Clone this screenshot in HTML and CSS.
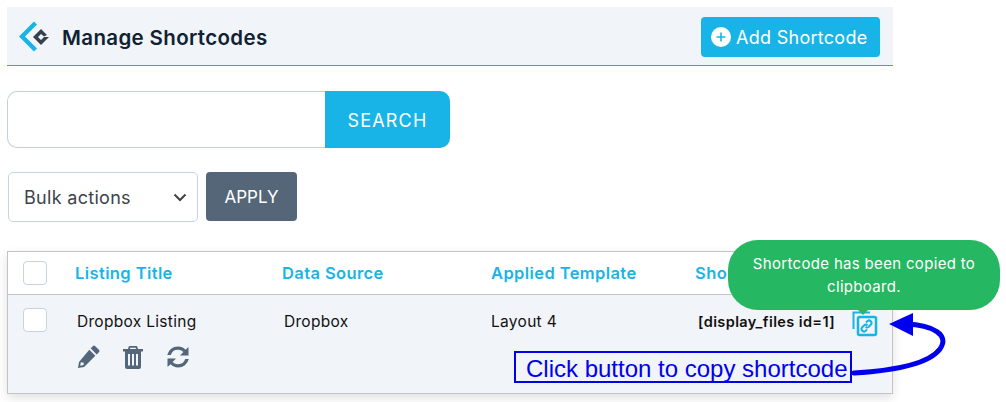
FILE: index.html
```html
<!DOCTYPE html>
<html lang="en">
<head>
<meta charset="utf-8">
<title>Manage Shortcodes</title>
<link rel="stylesheet" href="styles.css">
</head>
<body>
<div class="page">
  <header class="topbar">
    <div class="brand">
      <svg class="logo" width="32" height="32" viewBox="0 0 32 32">
        <path d="M16.500 2 L3 15.500 L16.500 29" fill="none" stroke="#19b4e7" stroke-width="4.400"/>
        <path d="M22 8 L28 14 L25 15.500 L22 13 L19 16 L22 19 L25 16 H30 L22 24 L14 16 Z" fill="#37404d"/>
      </svg>
      <h1 class="title">Manage Shortcodes</h1>
    </div>
    <button class="add-btn">
      <svg class="add-icon" width="20" height="20" viewBox="0 0 20 20">
        <circle cx="10" cy="10" r="10" fill="#fff"/>
        <path d="M10 5.500V14.500M5.500 10H14.500" stroke="#19b4e7" stroke-width="1.600"/>
      </svg>
      <span>Add Shortcode</span>
    </button>
  </header>

  <form class="search">
    <input class="search-input" type="text" aria-label="Search">
    <button class="search-btn" type="button">SEARCH</button>
  </form>

  <div class="bulk">
    <div class="select">
      <span>Bulk actions</span>
      <svg width="14" height="9" viewBox="0 0 14 9"><path d="M1.500 1.500L7 7L12.500 1.500" fill="none" stroke="#3c434a" stroke-width="2"/></svg>
    </div>
    <button class="apply-btn" type="button">APPLY</button>
  </div>

  <section class="table">
    <div class="row head">
      <span class="cell-check"><span class="check"></span></span>
      <span class="c1">Listing Title</span>
      <span class="c2">Data Source</span>
      <span class="c3">Applied Template</span>
      <span class="c4">Shortcode</span>
    </div>
    <div class="row body-row">
      <span class="cell-check"><span class="check"></span></span>
      <div class="c1 first">
        <span class="name">Dropbox Listing</span>
        <div class="actions">
          <svg width="24" height="24" viewBox="0 0 24 24"><path fill="#54677a" d="M16.500 1.200a1.800 1.800 0 0 1 2.500 0l3.800 3.800a1.800 1.800 0 0 1 0 2.500l-2.300 2.300-6.300-6.300zM12.800 4.900l6.300 6.300L7.400 22.900 1 24l1.100-6.400zM4 18l-.7 3.500 3.500-.7.3-2.300z" transform="scale(.96)"/></svg>
          <svg width="20" height="23" viewBox="0 0 20 23"><path fill="#54677a" d="M7 0h6a1.500 1.500 0 0 1 1.500 1.200L15 3h5v2.500h-2V21a2 2 0 0 1-2 2H4a2 2 0 0 1-2-2V5.500H0V3h5l.5-1.800A1.500 1.500 0 0 1 7 0zM7.300 1.800 7 3h6l-.3-1.200zM5 8v11.500h2V8zm4 0v11.500h2V8zm4 0v11.500h2V8z"/></svg>
          <svg width="24" height="24" viewBox="0 0 24 24"><path fill="#54677a" d="M12 1.500c3 0 5.600 1.200 7.500 3.200L22.500 2v8.500H14l3.400-3.400A7.600 7.600 0 0 0 12 4.800 7.400 7.400 0 0 0 4.800 10H1.200A10.900 10.900 0 0 1 12 1.500zM1.500 13.500H10l-3.400 3.400A7.600 7.600 0 0 0 12 19.200a7.400 7.400 0 0 0 7.200-5.200h3.600A10.900 10.900 0 0 1 12 22.500c-3 0-5.600-1.200-7.500-3.200L1.500 22z"/></svg>
        </div>
      </div>
      <span class="c2 cell">Dropbox</span>
      <span class="c3 cell">Layout 4</span>
      <span class="c4 cell code">[display_files id=1]</span>
    </div>
  </section>

  <svg class="copy-icon" width="26" height="28" viewBox="0 0 26 28" aria-hidden="true">
    <path d="M1.500 20V3.500H18" fill="none" stroke="#19b4e7" stroke-width="2"/>
    <rect x="6" y="8" width="18" height="18" rx="1.500" fill="#f1f4f8" stroke="#19b4e7" stroke-width="2.500"/>
    <path d="M14 13.500l1.500-1.500a2.500 2.500 0 0 1 3.500 3.500l-2.500 2.500a2.500 2.500 0 0 1-3 0M15.500 16.500a2.500 2.500 0 0 0-3-.5l-2.500 2.500a2.500 2.500 0 0 0 3.500 3.500l1.500-1.500" fill="none" stroke="#19b4e7" stroke-width="2"/>
  </svg>

  <div class="toast">Shortcode has been copied to clipboard.</div>
  <span class="toast-tip"></span>

  <div class="callout">Click button to copy shortcode</div>
  <svg class="arrow" width="110" height="70" viewBox="0 0 110 70" aria-hidden="true">
    <path d="M6 60 C 40 58, 80 52, 92 36 C 102 22, 85 12, 58 11" fill="none" stroke="#0000ee" stroke-width="5" stroke-linecap="round"/>
    <path d="M41 11 L65 0 L65 23 Z" fill="#0000ee"/>
  </svg>
</div>
</body>
</html>
```

FILE: styles.css
```css
* { box-sizing: border-box; }
html, body { margin: 0; padding: 0; background: #fff; }
body { font-family: Inter, "Open Sans", sans-serif; color: #111; overflow: hidden; }
.page { position: relative; width: 1006px; height: 402px; padding: 7px 113px 0 7px; }

.topbar {
  height: 59px;
  background: #f1f4f8;
  border-bottom: 1px solid #29a9d6;
  display: flex;
  align-items: center;
  justify-content: space-between;
  padding: 2px 13px 0 12px;
}
.brand { display: flex; align-items: center; gap: 11px; }
.logo { display: block; }
.title { margin: 0; font-size: 20.500px; font-weight: 600; color: #0f2233; letter-spacing: .35px; }
.add-btn {
  width: 179px; height: 40px;
  border: 0; border-radius: 4px;
  background: #19b4e7; color: #fff;
  display: flex; align-items: center; gap: 5px;
  padding: 0 0 0 10px;
  font: 400 18px Inter, sans-serif;
  letter-spacing: .28px;
}
.add-icon { display: block; flex: none; }

.search { display: flex; margin-top: 25px; height: 57px; }
.search-input {
  width: 318px; height: 100%;
  border: 1px solid #c6d0da; border-right: 0;
  border-radius: 10px 0 0 10px;
  background: #fff;
}
.search-btn {
  width: 125px; height: 100%;
  border: 0; border-radius: 0 10px 10px 0;
  background: #19b4e7; color: #fff;
  font: 400 18px Inter, sans-serif;
  letter-spacing: 1.2px;
  padding: 2px 0 0;
}

.bulk { display: flex; gap: 8px; margin: 24px 0 0 1px; height: 50px; }
.select {
  width: 190px; height: 50px;
  border: 1px solid #c5d3e3; border-radius: 5px;
  display: flex; align-items: center; justify-content: space-between;
  padding: 0 10px 0 15px;
  font-size: 18px; color: #3c434a;
  letter-spacing: .3px;
}
.apply-btn {
  width: 91px; height: 49px;
  border: 0; border-radius: 4px;
  background: #566679; color: #fff;
  font: 400 17px Inter, sans-serif;
}

.table {
  margin-top: 29px;
  height: 143px;
  border: 1px solid #c3c4c7;
  box-shadow: 0 4px 10px rgba(0,0,0,.12);
  background: #fff;
}
.row { display: flex; }
.head {
  height: 43px;
  align-items: center;
  border-bottom: 1px solid #c3c4c7;
  font-size: 16.500px; font-weight: 600; color: #19b4e7;
  letter-spacing: .4px;
}
.body-row {
  height: 98px;
  background: #f1f4f8;
  font-size: 15.500px; color: #111;
  padding-top: 14px;
  letter-spacing: .3px;
}
.cell-check { width: 67px; padding-left: 15px; flex: none; }
.body-row .cell-check { margin-top: -1px; }
.check {
  display: block; width: 24px; height: 24px;
  border: 1px solid #c5d3e3; border-radius: 4px; background: #fff;
}
.c1 { width: 207px; flex: none; }
.c2 { width: 209px; flex: none; }
.c3 { width: 204px; flex: none; }
.c4 { flex: 1; }
.first { padding-left: 2px; }
.name, .cell { display: block; line-height: 26px; }
.cell { padding-left: 2px; }
.c3.cell { padding-left: 0; }
.code { font-size: 14.500px; font-weight: 600; padding-left: 3px; letter-spacing: .4px; }
.actions { display: flex; align-items: center; gap: 22px; margin-top: 10px; }
.actions svg { display: block; }
.actions svg:last-child { margin-left: 1px; }

.copy-icon { position: absolute; left: 852px; top: 309px; }
.toast {
  position: absolute; left: 728px; top: 240px;
  width: 272px; height: 70px;
  border-radius: 30px;
  background: #26b762; color: #fff;
  font-size: 15px; line-height: 23px;
  letter-spacing: .32px;
  text-align: center;
  padding: 12px 14px;
}
.toast-tip {
  position: absolute; left: 857px; top: 309px;
  border: 6px solid transparent; border-top-color: #26b762; border-bottom: 0;
}
.callout {
  position: absolute; left: 514px; top: 351px;
  width: 338px; height: 32px;
  border: 2px solid #0000ee;
  color: #0000ee;
  font: 400 24px/31px "Liberation Sans", sans-serif;
  padding-left: 10px;
  white-space: nowrap;
}
.arrow { position: absolute; left: 848px; top: 313px; }
```
